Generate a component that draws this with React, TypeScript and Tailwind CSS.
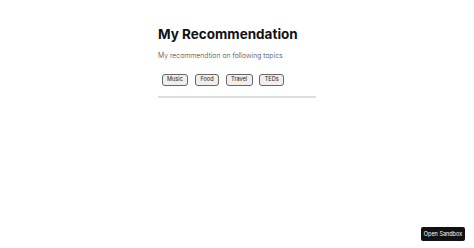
export default function App(): JSX.Element {
  const topics = ["Music", "Food", "Travel", "TEDs"];

  return (
    <div className="relative h-[248px] w-[474px] bg-white font-['Inter',sans-serif]">
      <div className="mx-auto w-[158px] pt-[25px]">
        <h1 className="text-[13.5px] font-bold leading-[18px] text-[#111]">My Recommendation</h1>
        <p className="mt-[7.5px] text-[6.9px] font-light leading-[10px] text-[#4a4a4a]">
          My recommendtion on following topics
        </p>
        <div className="mt-[13.5px] flex gap-[6.5px] pl-[3.5px]">
          {topics.map((t) => (
            <button
              key={t}
              className="h-[12px] rounded-[3px] border border-[#666] bg-[#efefef] px-[4.5px] text-[5.6px] leading-none text-[#222]"
            >
              {t}
            </button>
          ))}
        </div>
        <div className="mt-[10px] h-[2px] w-[158px] bg-[#ddd]" />
      </div>

      <div className="absolute bottom-[7px] right-[9px] flex h-[14px] w-[44px] items-center justify-center rounded-[2px] bg-[#111] text-[5.5px] text-white">
        Open Sandbox
      </div>
    </div>
  );
}
